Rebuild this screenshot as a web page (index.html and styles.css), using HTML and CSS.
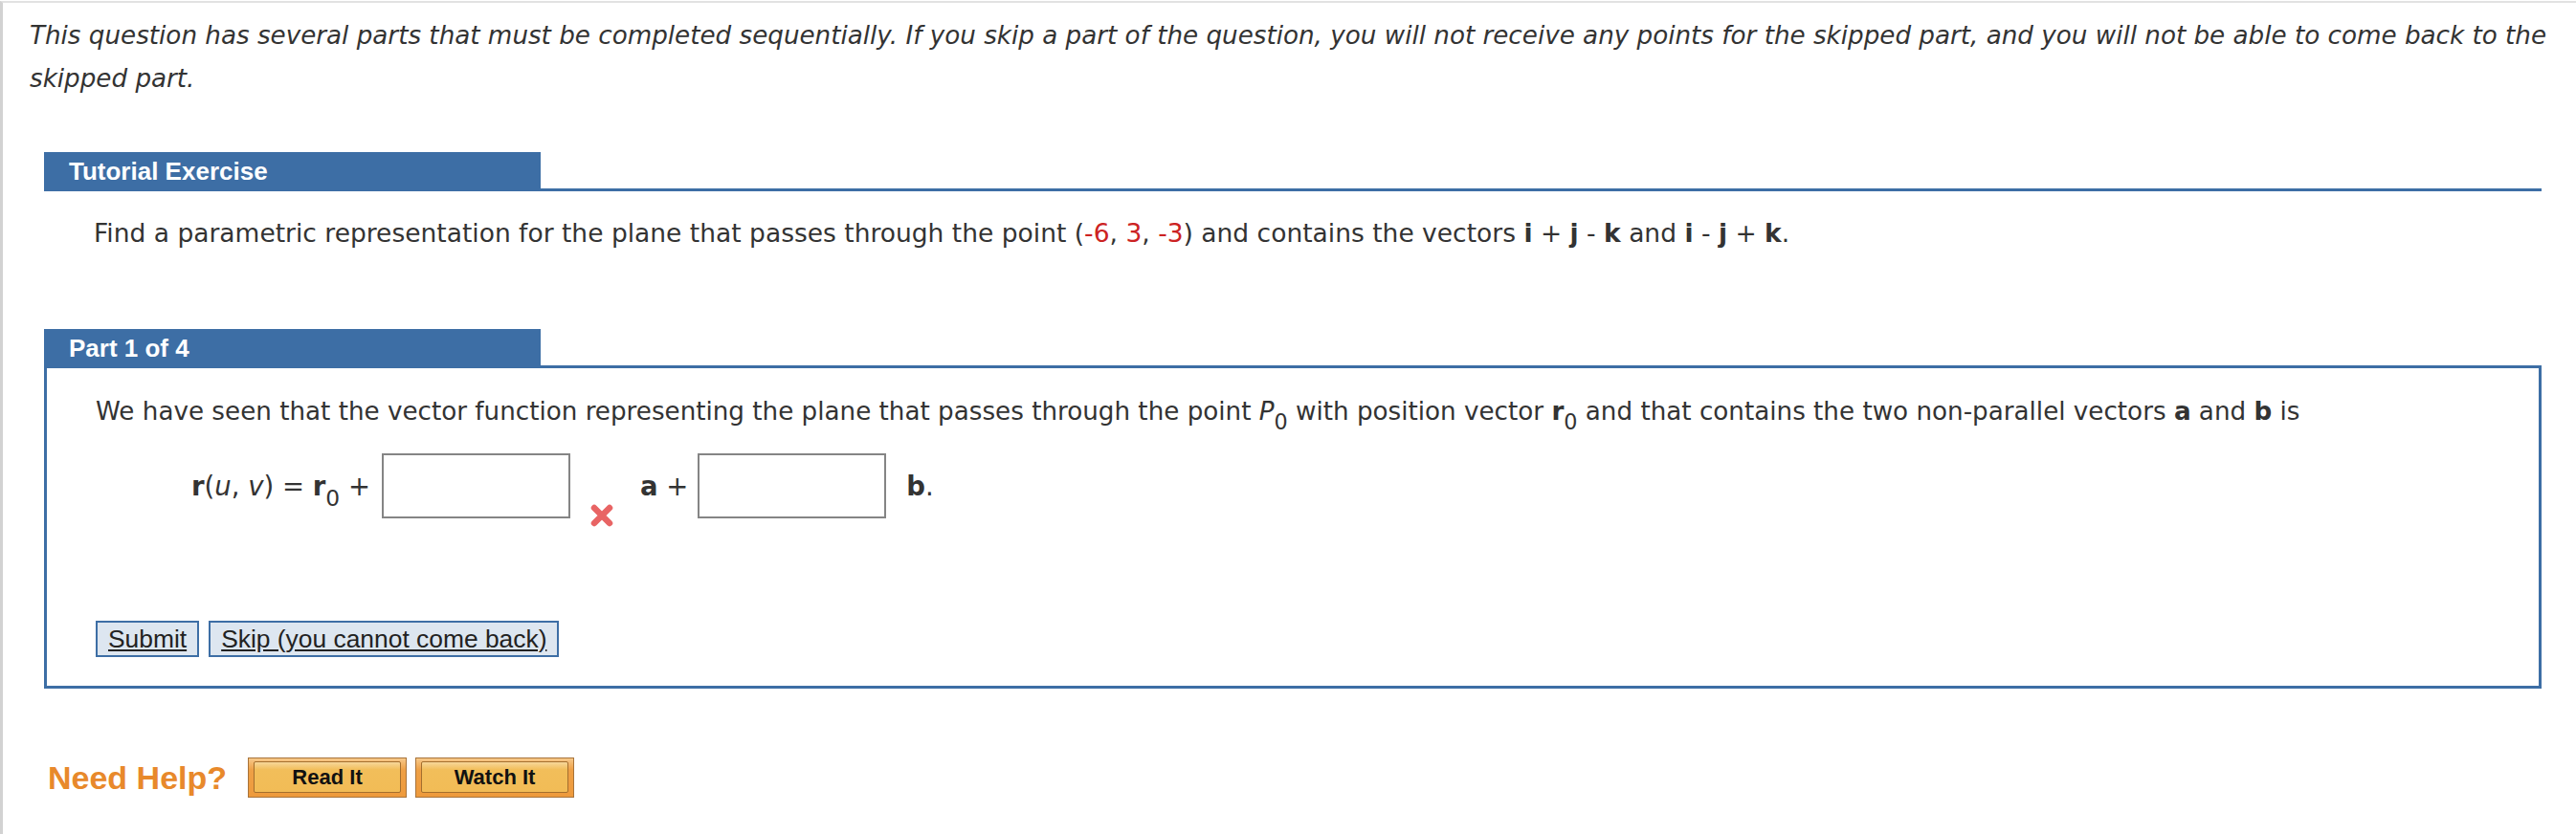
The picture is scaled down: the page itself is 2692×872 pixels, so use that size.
FILE: index.html
```html
<!DOCTYPE html>
<html lang="en">
<head>
<meta charset="utf-8">
<title>Tutorial Exercise</title>
<link rel="stylesheet" href="styles.css">
</head>
<body>
<div class="page">
  <p class="notice">This question has several parts that must be completed sequentially. If you skip a part of the question, you will not receive any points for the skipped part, and you will not be able to come back to the skipped part.</p>

  <section class="section tutorial">
    <div class="sec-head"><span class="tab">Tutorial Exercise</span><span class="rule"></span></div>
    <p class="prompt find">Find a parametric representation for the plane that passes through the point (<span class="red">-6</span>, <span class="red">3</span>, <span class="red">-3</span>) and contains the vectors <b>i</b> + <b>j</b> - <b>k</b> and <b>i</b> - <b>j</b> + <b>k</b>.</p>
  </section>

  <section class="section part">
    <div class="sec-head"><span class="tab">Part 1 of 4</span><span class="rule"></span></div>
    <div class="part-box">
      <p class="prompt">We have seen that the vector function representing the plane that passes through the point <i>P</i><sub>0</sub> with position vector <b>r</b><sub>0</sub> and that contains the two non-parallel vectors <b>a</b> and <b>b</b> is</p>
      <div class="eq">
        <span class="eq-lead"><b>r</b>(<i>u</i>, <i>v</i>) = <b>r</b><sub>0</sub> +</span>
        <span class="answer"></span>
        <span class="wrong" aria-label="incorrect"><svg viewBox="0 0 26 26" width="26" height="26"><path d="M5 5 L21 21 M21 5 L5 21" stroke="#e86464" stroke-width="6.5" stroke-linecap="round" fill="none"/></svg></span>
        <span class="eq-mid"><b>a</b> +</span>
        <span class="answer"></span>
        <span class="eq-end"><b>b</b>.</span>
      </div>
      <div class="actions">
        <button class="btn">Submit</button>
        <button class="btn">Skip (you cannot come back)</button>
      </div>
    </div>
  </section>

  <div class="help">
    <span class="help-label">Need Help?</span>
    <button class="help-btn"><span>Read It</span></button>
    <button class="help-btn"><span>Watch It</span></button>
  </div>
</div>
</body>
</html>
```

FILE: styles.css
```css
html, body {
  margin: 0;
  padding: 0;
  background: #ffffff;
}

body {
  font-family: "DejaVu Sans", Verdana, sans-serif;
  color: #333333;
}

.page {
  margin-top: 1px;
  border-top: 2px solid #e2e2e2;
  border-left: 3px solid #d2d2d2;
  padding: 0 36px 40px 28px;
  min-height: 860px;
  box-sizing: border-box;
}

.notice {
  margin: 0 -30px 0 0;
  padding-top: 12px;
  font-style: italic;
  font-size: 26.2px;
  line-height: 45px;
  color: #333333;
}

.section {
  margin-left: 15px;
}

.tutorial {
  margin-top: 54px;
}

.part {
  margin-top: 80px;
}

.sec-head {
  display: flex;
  align-items: flex-end;
}

.tab {
  display: flex;
  align-items: center;
  box-sizing: border-box;
  width: 519px;
  height: 41px;
  padding-left: 26px;
  background: #3d6ea5;
  color: #ffffff;
  font-family: "Liberation Sans", Arial, sans-serif;
  font-weight: bold;
  font-size: 26px;
}

.rule {
  flex: 1;
  height: 3px;
  background: #3d6ea5;
}

.prompt {
  margin: 0;
  font-size: 26.2px;
  line-height: 40px;
  color: #333333;
}

.tutorial .prompt {
  padding: 24px 0 0 52px;
}

.find {
  font-size: 26.5px;
}

.red {
  color: #cc2222;
}

sub {
  font-size: 0.85em;
  vertical-align: -0.45em;
  line-height: 0;
}

.part-box {
  border: 3px solid #3d6ea5;
  border-top: none;
  padding: 25px 30px 30px 51px;
}

.eq {
  display: flex;
  align-items: center;
  margin-top: 24px;
  padding-left: 100px;
  font-size: 27.5px;
  color: #333333;
}

.eq-lead {
  margin-right: 12px;
}

.answer {
  display: block;
  box-sizing: border-box;
  width: 197px;
  height: 68px;
  border: 2px solid #858585;
  background: #ffffff;
}

.wrong {
  display: block;
  align-self: flex-end;
  margin: 0 27px -10px 20px;
  width: 26px;
  height: 26px;
}

.wrong svg {
  display: block;
}

.eq-mid {
  margin-right: 10px;
}

.eq-end {
  margin-left: 21px;
}

.actions {
  display: flex;
  gap: 10px;
  margin-top: 107px;
}

.btn {
  box-sizing: border-box;
  height: 38px;
  padding: 0 11px;
  border: 2px solid #3d6ea5;
  background: #dde6f0;
  color: #222222;
  font-family: "Liberation Sans", Arial, sans-serif;
  font-size: 26.4px;
  text-decoration: underline;
  cursor: pointer;
}

.help {
  display: flex;
  align-items: center;
  gap: 9px;
  margin-top: 72px;
  margin-left: 19px;
}

.help-label {
  font-family: "Liberation Sans", Arial, sans-serif;
  font-weight: bold;
  font-size: 34px;
  color: #e8892b;
  margin-right: 13px;
}

.help-btn {
  box-sizing: border-box;
  width: 166px;
  height: 42px;
  padding: 3px 5px 4px;
  border: 1px solid #a8733a;
  background: linear-gradient(#f7c98a 0%, #eea046 30%, #ee9a3c 100%);
  cursor: pointer;
}

.help-btn span {
  display: flex;
  align-items: center;
  justify-content: center;
  box-sizing: border-box;
  height: 100%;
  border: 1px solid #a46f2e;
  border-radius: 2px;
  background: linear-gradient(#f7d79a 0%, #f2be5a 25%, #f2bc56 100%);
  font-family: "Liberation Sans", Arial, sans-serif;
  font-weight: bold;
  font-size: 22px;
  color: #111111;
}
```
